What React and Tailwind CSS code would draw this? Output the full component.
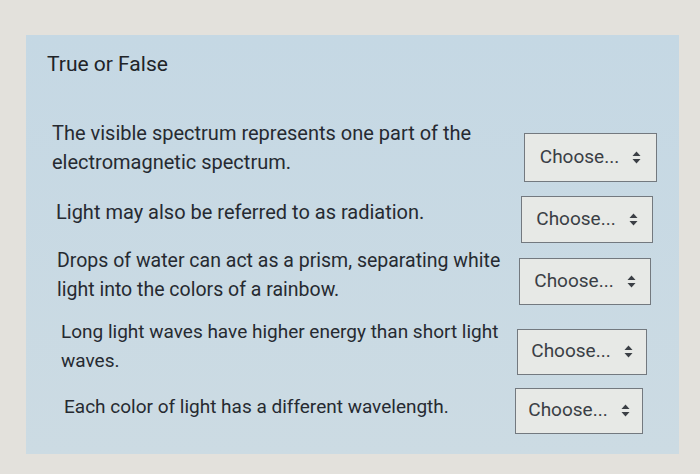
// Row layout follows the photo: rows drift slightly as the screen recedes
const questions = [
  {
    text: "The visible spectrum represents one part of the electromagnetic spectrum.",
    row: "h-[67px]", size: "text-[20px]", pad: "pl-[5px]", col: "w-[477px]",
    sel: "w-[133px] h-[49px] mt-[20px]",
  },
  {
    text: "Light may also be referred to as radiation.",
    row: "h-[63px]", size: "text-[20px]", pad: "pl-[9px]", col: "w-[474px]",
    sel: "w-[132px] h-[47px] mt-[13px]",
  },
  {
    text: "Drops of water can act as a prism, separating white light into the colors of a rainbow.",
    row: "h-[62px]", size: "text-[19.5px]", pad: "pl-[10px]", col: "w-[472px]",
    sel: "w-[132px] h-[47px] mt-[12px]",
  },
  {
    text: "Long light waves have higher energy than short light waves.",
    row: "h-[80px]", size: "text-[19px]", pad: "pl-[14px]", col: "w-[470px]",
    sel: "w-[130px] h-[46px] mt-[11px]",
  },
  {
    text: "Each color of light has a different wavelength.",
    row: "h-[41px]", size: "text-[19px]", pad: "pl-[17px]", col: "w-[468px]",
    sel: "w-[128px] h-[46px] mt-[8px]",
  },
];

function UpDown() {
  return (
    <svg width="9" height="13" viewBox="0 0 9 13" className="shrink-0">
      <path d="M4.5 0.5 L8.5 5 L0.5 5 Z" fill="#3b3f45" />
      <path d="M4.5 12.5 L8.5 8 L0.5 8 Z" fill="#3b3f45" />
    </svg>
  );
}

function ChooseSelect({ className }) {
  return (
    <div className={`${className} shrink-0 border border-[#73797f] bg-[#e7e9e6] flex items-center justify-center gap-[13px] text-[19px] text-[#3a3e45]`}>
      <span>Choose...</span>
      <UpDown />
    </div>
  );
}

export default function App() {
  return (
    <div className="w-[700px] h-[474px] bg-[#e3e1dc] overflow-hidden pt-[35px] pl-[26px]" style={{ fontFamily: "Roboto, 'Liberation Sans', sans-serif" }}>
      <div className="w-[653px] h-[419px] bg-gradient-to-b from-[#c5d8e4] to-[#ccdbe3] pt-[15px] pl-[21px]">
        <h2 className="text-[21px] leading-[28px] text-[#202328]">True or False</h2>
        <div className="mt-[36px] flex flex-col">
          {questions.map((q, i) => (
            <div key={i} className={`${q.row} flex items-center`}>
              <p className={`${q.col} ${q.pad} ${q.size} shrink-0 pr-[2px] leading-[29px] text-[#262a31]`}>{q.text}</p>
              <ChooseSelect className={q.sel} />
            </div>
          ))}
        </div>
      </div>
    </div>
  );
}
